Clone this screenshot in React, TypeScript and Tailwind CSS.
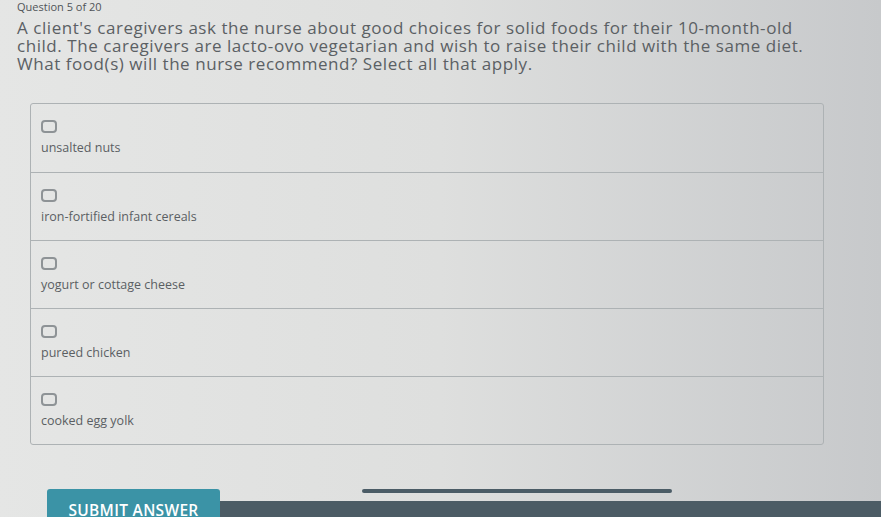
import React from 'react';

const options = [
  'unsalted nuts',
  'iron-fortified infant cereals',
  'yogurt or cottage cheese',
  'pureed chicken',
  'cooked egg yolk',
];

export default function App() {
  return (
    <div
      className="flex h-[517px] w-[881px] flex-col overflow-hidden bg-linear-to-r from-[#e5e6e5] via-[#dedfde] to-[#c7c9cb] text-[#565a5e]"
      style={{ fontFamily: '"Open Sans", "Noto Sans", sans-serif' }}
    >
      <div className="pl-[17px] pt-[1px] text-[11px] leading-[12px] text-[#505458]">Question 5 of 20</div>

      <p className="mt-[6px] whitespace-nowrap pl-[17px] text-[17px] leading-[18px] tracking-[0.55px] text-[#5b6064]">
        A client's caregivers ask the nurse about good choices for solid foods for their 10-month-old
        <br />
        child. The caregivers are lacto-ovo vegetarian and wish to raise their child with the same diet.
        <br />
        What food(s) will the nurse recommend? Select all that apply.
      </p>

      <div className="ml-[30px] mt-[30px] w-[794px] rounded-[3px] border border-[#adb2b4]">
        {options.map((label, i) => (
          <div
            key={label}
            className={`flex h-[68px] flex-col pl-[10px] pt-[16px] ${i > 0 ? 'border-t border-[#adb2b4]' : ''}`}
          >
            <div className="h-[13px] w-[16px] rounded-[4px] border-2 border-[#8e9396]" />
            <div className="mt-[8px] text-[12.5px] leading-[14px] text-[#5b5f63]">{label}</div>
          </div>
        ))}
      </div>

      <div className="mt-[44px] flex flex-1 items-start">
        <div className="ml-[47px] h-[40px] w-[173px] rounded-t-[3px] bg-[#3b93a6] pt-[12px] text-center text-[15.5px] font-semibold leading-[18px] tracking-[0.3px] text-white">
          SUBMIT ANSWER
        </div>
        <div className="flex flex-1 flex-col">
          <div className="ml-[142px] h-[4px] w-[310px] rounded-full bg-[#4b5c66]" />
          <div className="mt-[8px] h-[40px] bg-[#4c5c65]" />
        </div>
      </div>
    </div>
  );
}
